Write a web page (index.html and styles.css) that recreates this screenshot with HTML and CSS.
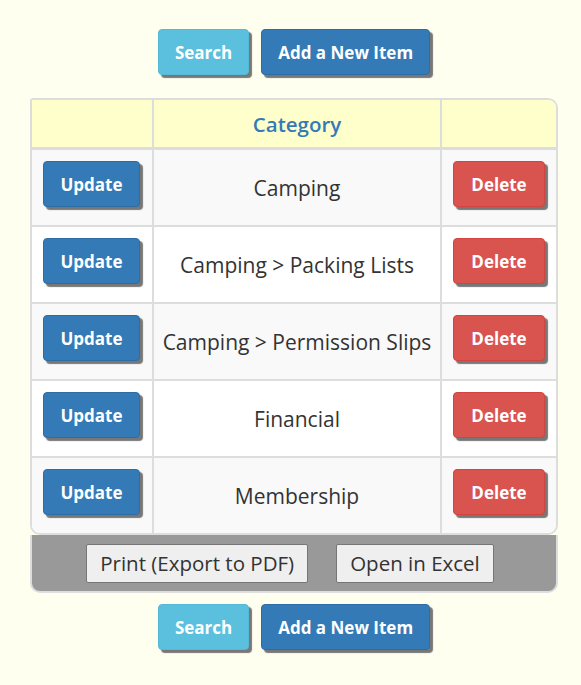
FILE: index.html
```html
<!DOCTYPE html>
<html>
<head>
<meta charset="utf-8">
<link rel="stylesheet" href="styles.css">
</head>
<body>
<div class="page">
  <div class="actions">
    <button class="btn btn-info">Search</button>
    <button class="btn btn-primary">Add a New Item</button>
  </div>
  <div class="grid-wrap">
    <table class="grid">
      <thead>
        <tr><th class="c1"></th><th class="c2">Category</th><th class="c3"></th></tr>
      </thead>
      <tbody>
        <tr class="odd"><td><button class="btn btn-primary">Update</button></td><td class="name">Camping</td><td><button class="btn btn-danger">Delete</button></td></tr>
        <tr><td><button class="btn btn-primary">Update</button></td><td class="name">Camping &gt; Packing Lists</td><td><button class="btn btn-danger">Delete</button></td></tr>
        <tr class="odd"><td><button class="btn btn-primary">Update</button></td><td class="name">Camping &gt; Permission Slips</td><td><button class="btn btn-danger">Delete</button></td></tr>
        <tr><td><button class="btn btn-primary">Update</button></td><td class="name">Financial</td><td><button class="btn btn-danger">Delete</button></td></tr>
        <tr class="odd"><td><button class="btn btn-primary">Update</button></td><td class="name">Membership</td><td><button class="btn btn-danger">Delete</button></td></tr>
      </tbody>
    </table>
  </div>
  <div class="footer">
    <button class="plain">Print (Export to PDF)</button>
    <button class="plain">Open in Excel</button>
  </div>
  <div class="actions bottom">
    <button class="btn btn-info">Search</button>
    <button class="btn btn-primary">Add a New Item</button>
  </div>
</div>
</body>
</html>
```
FILE: styles.css
```css
html, body {
  margin: 0;
  padding: 0;
  background: #fffff0;
}
body {
  font-family: "Open Sans", "Noto Sans", sans-serif;
  color: #333;
}
.page {
  width: 528px;
  margin-left: 30px;
  padding-top: 29px;
}
.actions {
  display: flex;
  justify-content: center;
  gap: 12px;
  margin-bottom: 23px;
}
.actions.bottom {
  margin-top: 11px;
}
.btn {
  font-family: inherit;
  font-weight: 700;
  font-size: 17px;
  color: #fff;
  border: 1px solid transparent;
  border-radius: 4px;
  height: 46px;
  padding: 0 16px;
  box-shadow: 3px 3px 1px #777;
  cursor: pointer;
}
.btn-info { background: #5bc0de; border-color: #55b8d6; }
.btn-primary { background: #337ab7; border-color: #2e6da4; }
.btn-danger { background: #d9534f; border-color: #d14440; }

.grid-wrap {
  border: 2px solid #ddd;
  border-radius: 3px 10px 10px 10px;
  overflow: hidden;
  background: #fff;
}
.grid {
  width: 100%;
  border-collapse: collapse;
}
.grid th {
  background: #ffffcc;
  height: 47px;
  color: #337ab7;
  font-weight: 600;
  font-size: 20.5px;
  border-bottom: 3px solid #ddd;
  border-left: 2px solid #ddd;
  padding: 0;
}
.grid th:first-child, .grid td:first-child { border-left: none; }
.c1 { width: 120px; }
.c3 { width: 114px; }
.grid td {
  border-left: 2px solid #ddd;
  border-top: 2px solid #ddd;
  height: 72px;
  padding: 0 0 0 11px;
  vertical-align: middle;
}
.grid thead + tbody tr:first-child td { border-top: none; }
.grid tbody tr { background: #fff; }
.grid tbody tr.odd { background: #f9f9f9; }
.grid td .btn { margin-bottom: 7px; display: block; }
.grid td.name {
  text-align: center;
  font-size: 21px;
  padding: 2px 0 1px 0;
}
.grid td .btn-primary { width: 97px; }
.grid td .btn-danger { width: 92px; }

.footer {
  background: #999;
  border: 2px solid #ddd;
  border-top: none;
  border-radius: 0 0 10px 10px;
  height: 56px;
  display: flex;
  justify-content: center;
  align-items: center;
  gap: 28px;
  padding-right: 8px;
}
.plain {
  font-family: inherit;
  font-size: 20.5px;
  color: #333;
  background: #efefef;
  border: 1px solid #767676;
  border-radius: 2px;
  height: 39px;
  padding: 0 13px;
}
```
